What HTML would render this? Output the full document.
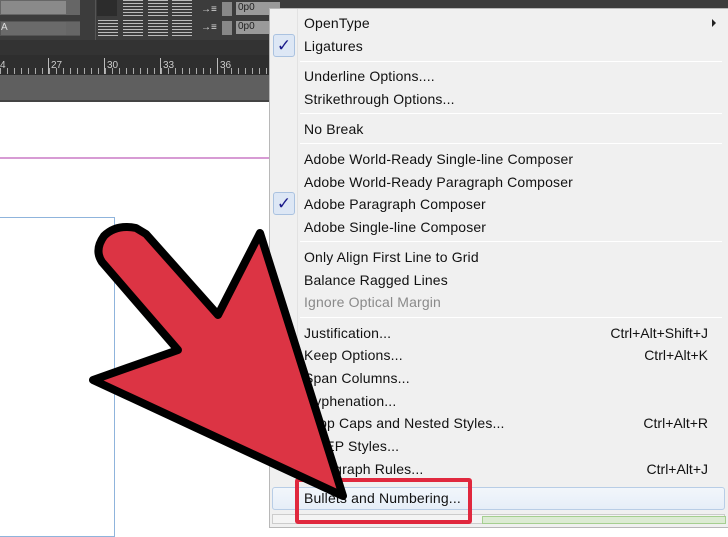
<!DOCTYPE html>
<html><head><meta charset="utf-8"><style>
*{margin:0;padding:0;box-sizing:border-box}
body{width:728px;height:522px;overflow:hidden;position:relative;background:#fff;font-family:"Liberation Sans",sans-serif}
.a{position:absolute}
.m{position:absolute;left:304px;font-size:14px;color:#111;line-height:16px;letter-spacing:0.15px}
.s{position:absolute;right:20px;font-size:14px;color:#111;line-height:16px}
.sep{position:absolute;left:300px;right:6px;height:1px;background:#d6d6d6;border-bottom:1px solid #fff}
.ic{position:absolute;width:20px;height:16px;background:repeating-linear-gradient(#bbb 0 1px,transparent 1px 3px)}
</style></head><body>
<div class="a" style="left:0;top:0;width:728px;height:48px;background:#3c3c3c"></div>
<div class="a" style="left:0;top:0;width:80px;height:15px;background:#8a8a8a;border:1px solid #666"></div>
<div class="a" style="left:66px;top:1px;width:14px;height:13px;background:#666"></div>
<div class="a" style="left:0;top:21px;width:80px;height:15px;background:#6a6a6a;border:1px solid #555;color:#ddd;font-size:10px">A</div>
<div class="a" style="left:66px;top:22px;width:14px;height:13px;background:#666"></div>
<div class="a" style="left:95px;top:0;width:6px;height:40px;border-left:1px solid #555"></div>
<div class="ic" style="left:97px;top:0;background:#2c2c2c"></div>
<div class="ic" style="left:123px;top:0"></div><div class="ic" style="left:148px;top:0"></div><div class="ic" style="left:172px;top:0"></div>
<div class="ic" style="left:98px;top:20px"></div><div class="ic" style="left:123px;top:20px"></div><div class="ic" style="left:148px;top:20px"></div><div class="ic" style="left:172px;top:20px"></div>
<div class="a" style="left:201px;top:4px;width:14px;height:12px;color:#ddd;font-size:10px">→≡</div>
<div class="a" style="left:201px;top:22px;width:14px;height:12px;color:#ddd;font-size:10px">→≡</div>
<div class="a" style="left:222px;top:2px;width:10px;height:14px;background:#888"></div>
<div class="a" style="left:222px;top:21px;width:10px;height:14px;background:#888"></div>
<div class="a" style="left:236px;top:2px;width:44px;height:13px;background:#9a9a9a;font-size:10px;color:#222;padding-left:2px">0p0</div>
<div class="a" style="left:236px;top:21px;width:44px;height:13px;background:#9a9a9a;font-size:10px;color:#222;padding-left:2px">0p0</div>
<div class="a" style="left:0;top:40px;width:728px;height:15px;background:#333"></div>
<div class="a" style="left:0;top:55px;width:728px;height:20px;background:#2e2e2e"></div>
<div class="a" style="left:0;top:68px;width:728px;height:6px;background:repeating-linear-gradient(90deg,#aaa 0 1px,transparent 1px 7px)"></div>
<div class="a" style="left:0;top:60px;font-size:10px;color:#ccc;width:300px">
<span class="a" style="left:0">4</span><span class="a" style="left:51px">27</span><span class="a" style="left:107px">30</span><span class="a" style="left:163px">33</span><span class="a" style="left:220px">36</span></div>
<div class="a" style="left:48px;top:58px;width:1px;height:16px;background:#bbb"></div>
<div class="a" style="left:104px;top:58px;width:1px;height:16px;background:#bbb"></div>
<div class="a" style="left:160px;top:58px;width:1px;height:16px;background:#bbb"></div>
<div class="a" style="left:217px;top:58px;width:1px;height:16px;background:#bbb"></div>
<div class="a" style="left:0;top:75px;width:728px;height:27px;background:#5f5f5f;border-bottom:2px solid #444"></div>
<div class="a" style="left:0;top:157px;width:272px;height:2px;background:#d79bd4"></div>
<div class="a" style="left:-2px;top:217px;width:117px;height:320px;border:1px solid #8fb4dc"></div>
<div class="a" style="left:269px;top:8px;width:462px;height:520px;background:#f0f0f0;border:1px solid #b8b8b8"></div>
<div class="a" style="left:297px;top:9px;width:1px;height:513px;background:#e2e2e2"></div>
<div class="a" style="left:273px;top:34px;width:22px;height:23px;background:#dde7f5;border:1px solid #aac2e0;border-radius:3px;color:#1a1a8a;font-size:17px;text-align:center;line-height:21px">✓</div>
<div class="a" style="left:273px;top:192px;width:22px;height:23px;background:#dde7f5;border:1px solid #aac2e0;border-radius:3px;color:#1a1a8a;font-size:17px;text-align:center;line-height:21px">✓</div>
<div class="a" style="left:712px;top:19px;width:0;height:0;border-left:4px solid #222;border-top:4px solid transparent;border-bottom:4px solid transparent"></div>
<div class="m" style="top:15px">OpenType</div>
<div class="m" style="top:38px">Ligatures</div>
<div class="sep" style="top:61px"></div>
<div class="m" style="top:68px">Underline Options....</div>
<div class="m" style="top:91px">Strikethrough Options...</div>
<div class="sep" style="top:113px"></div>
<div class="m" style="top:121px">No Break</div>
<div class="sep" style="top:143px"></div>
<div class="m" style="top:151px">Adobe World-Ready Single-line Composer</div>
<div class="m" style="top:174px">Adobe World-Ready Paragraph Composer</div>
<div class="m" style="top:196px">Adobe Paragraph Composer</div>
<div class="m" style="top:219px">Adobe Single-line Composer</div>
<div class="sep" style="top:241px"></div>
<div class="m" style="top:249px">Only Align First Line to Grid</div>
<div class="m" style="top:272px">Balance Ragged Lines</div>
<div class="m" style="top:294px;color:#8a8a8a">Ignore Optical Margin</div>
<div class="sep" style="top:317px"></div>
<div class="m" style="top:325px">Justification...</div><div class="s" style="top:325px">Ctrl+Alt+Shift+J</div>
<div class="m" style="top:347px">Keep Options...</div><div class="s" style="top:347px">Ctrl+Alt+K</div>
<div class="m" style="top:370px">Span Columns...</div>
<div class="m" style="top:393px">Hyphenation...</div>
<div class="m" style="top:415px">Drop Caps and Nested Styles...</div><div class="s" style="top:415px">Ctrl+Alt+R</div>
<div class="m" style="top:438px">GREP Styles...</div>
<div class="m" style="top:461px">Paragraph Rules...</div><div class="s" style="top:461px">Ctrl+Alt+J</div>
<div class="a" style="left:272px;top:487px;width:453px;height:23px;background:linear-gradient(#f2f6fb,#e6eef8);border:1px solid #b8cde6;border-radius:3px"></div>
<div class="m" style="top:490px">Bullets and Numbering...</div>
<div class="a" style="left:272px;top:514px;width:453px;height:10px;border:1px solid #ccc;background:#f4f4f4"></div>
<div class="a" style="left:482px;top:516px;width:244px;height:8px;background:#dcebd3;border:1px solid #a5cf90"></div>
<div class="a" style="left:295px;top:478px;width:177px;height:46px;border:4px solid #e0283e;border-radius:3px"></div>
<svg class="a" style="left:0;top:0" width="728" height="522">
<path d="M136 228 Q116 224 104 236 Q94 250 102 262 L178 350 L93 380 L343 496 L260 233 L218 315 L146 234 Z" fill="#dc3444" stroke="#000" stroke-width="8" stroke-linejoin="round"/>
</svg>
</body></html>
